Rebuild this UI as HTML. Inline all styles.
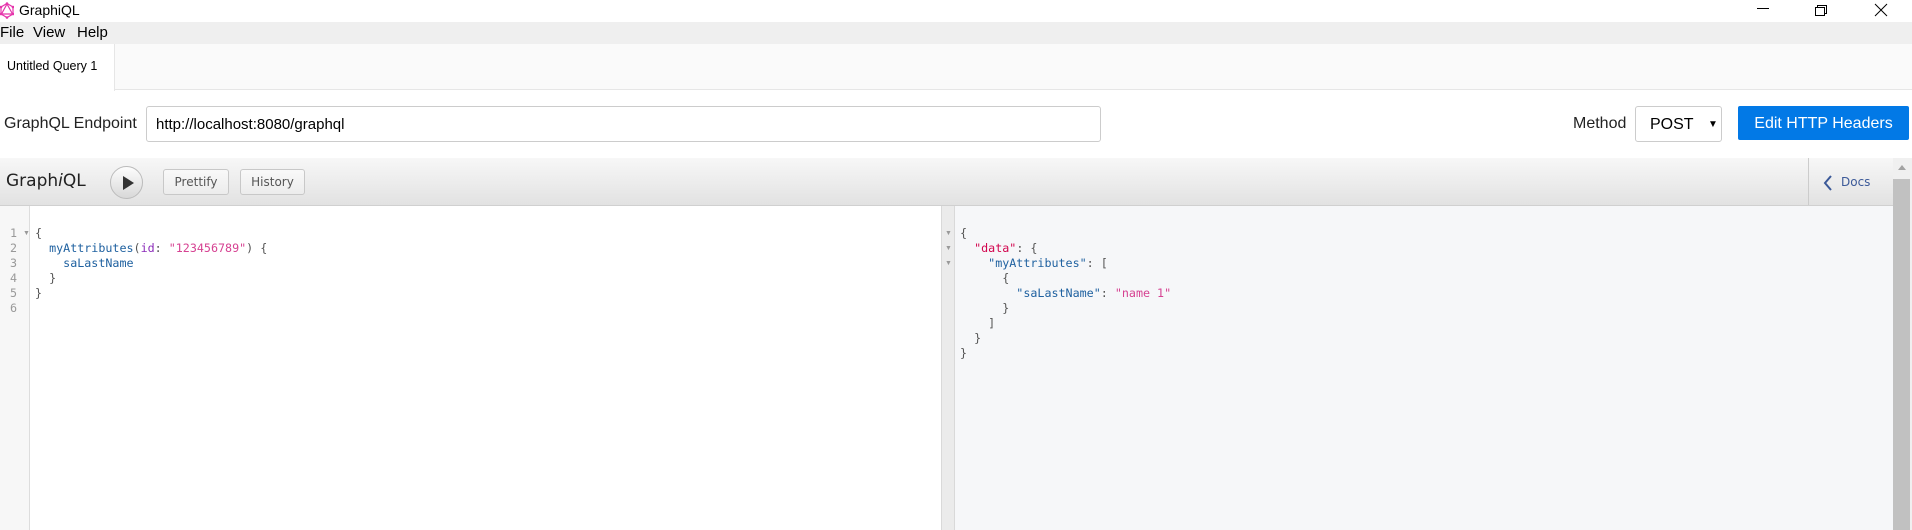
<!DOCTYPE html>
<html><head><meta charset="utf-8"><style>
*{box-sizing:border-box;margin:0;padding:0}
body{width:1912px;height:530px;overflow:hidden;background:#fff;font-family:"Liberation Sans",sans-serif;position:relative}
.a{position:absolute}
.mono{font-family:"DejaVu Sans Mono","Liberation Mono",monospace;font-size:11.7px;line-height:15px;white-space:pre}
</style></head><body>
<!-- title bar -->
<div class="a" style="left:0;top:0;width:1912px;height:22px;background:#fff"></div>
<svg class="a" style="left:0;top:2px" width="14" height="17" viewBox="0 0 14 17"><g fill="none" stroke="#e535ab" stroke-width="1.2"><polygon points="7,1.5 13,5 13,12 7,15.5 1,12 1,5"/><polygon points="7,2 12.5,12 1.5,12"/></g><g fill="#e535ab"><circle cx="7" cy="1.5" r="1.3"/><circle cx="13" cy="5" r="1.3"/><circle cx="13" cy="12" r="1.3"/><circle cx="7" cy="15.5" r="1.3"/><circle cx="1" cy="12" r="1.3"/><circle cx="1" cy="5" r="1.3"/></g></svg>
<div class="a" style="left:19px;top:2px;font-size:14px;color:#000">GraphiQL</div>
<div class="a" style="left:1757px;top:8px;width:12px;height:1px;background:#000"></div>
<div class="a" style="left:1817px;top:5px;width:10px;height:9px;border:1px solid #000;background:#fff"></div>
<div class="a" style="left:1815px;top:7px;width:10px;height:9px;border:1px solid #000;background:#fff"></div>
<svg class="a" style="left:1874px;top:3px" width="14" height="14"><path d="M1 1L13 13M13 1L1 13" stroke="#000" stroke-width="1"/></svg>
<!-- menu -->
<div class="a" style="left:0;top:22px;width:1912px;height:22px;background:#efefef;font-size:15px;line-height:22px;color:#000">
<span class="a" style="left:0">File</span><span class="a" style="left:33px">View</span><span class="a" style="left:77px">Help</span></div>
<!-- tabs -->
<div class="a" style="left:0;top:44px;width:1912px;height:46px;background:#fafafa;border-bottom:1px solid #e6e6e6"></div>
<div class="a" style="left:0;top:44px;width:115px;height:47px;background:#fff;border-right:1px solid #e6e6e6;font-size:12.5px;line-height:44px;padding-left:7px;color:#000">Untitled Query 1</div>
<!-- endpoint -->
<div class="a" style="left:4px;top:115px;font-size:16px;color:#222">GraphQL Endpoint</div>
<div class="a" style="left:146px;top:106px;width:955px;height:36px;border:1px solid #ccc;border-radius:3px;font-size:15px;line-height:35px;padding-left:9px;color:#000">http://localhost:8080/graphql</div>
<div class="a" style="left:1573px;top:115px;font-size:16px;color:#222">Method</div>
<div class="a" style="left:1635px;top:106px;width:87px;height:36px;border:1px solid #ccc;border-radius:3px;font-size:16px;line-height:36px;padding-left:14px;color:#000">POST<span class="a" style="left:72px;top:0;font-size:10px">▼</span></div>
<div class="a" style="left:1738px;top:106px;width:171px;height:34px;background:#0279e6;border-radius:2px;color:#fff;font-size:16px;line-height:36px;text-align:center">Edit HTTP Headers</div>
<!-- toolbar -->
<div class="a" style="left:0;top:158px;width:1893px;height:48px;background:linear-gradient(#f7f7f7,#e2e2e2);border-bottom:1px solid #d0d0d0"></div>
<div class="a" style="left:6px;top:171px;font-family:'DejaVu Sans',sans-serif;font-size:17px;color:#222">Graph<i>i</i>QL</div>
<div class="a" style="left:110px;top:166px;width:33px;height:33px;border-radius:50%;border:1px solid #bbb;background:linear-gradient(#fdfdfd,#d8d8d8)"></div>
<svg class="a" style="left:121px;top:175px" width="14" height="16"><polygon points="2,1 13,8 2,15" fill="#333"/></svg>
<div class="a" style="left:163px;top:169px;width:66px;height:26px;border:1px solid #c8c8c8;border-radius:3px;background:linear-gradient(#f9f9f9,#ececec);font-family:'DejaVu Sans',sans-serif;font-size:12px;line-height:24px;text-align:center;color:#555">Prettify</div>
<div class="a" style="left:240px;top:169px;width:65px;height:26px;border:1px solid #c8c8c8;border-radius:3px;background:linear-gradient(#f9f9f9,#ececec);font-family:'DejaVu Sans',sans-serif;font-size:12px;line-height:24px;text-align:center;color:#555">History</div>
<div class="a" style="left:1808px;top:158px;width:1px;height:47px;background:#ccc"></div>
<svg class="a" style="left:1823px;top:175px" width="10" height="16"><path d="M8 1L2 8L8 15" stroke="#3b5998" stroke-width="2" fill="none"/></svg>
<div class="a" style="left:1841px;top:175px;font-family:'DejaVu Sans',sans-serif;font-size:12px;color:#3b5998">Docs</div>
<!-- scrollbar -->
<div class="a" style="left:1893px;top:158px;width:19px;height:372px;background:#f0f0f0"></div>
<svg class="a" style="left:1897px;top:164px" width="10" height="8"><polygon points="5,1 9,6 1,6" fill="#a3a3a3"/></svg>
<div class="a" style="left:1893px;top:179px;width:17px;height:351px;background:#c1c1c1"></div>
<!-- query editor -->
<div class="a" style="left:0;top:206px;width:30px;height:324px;background:#f7f7f7;border-right:1px solid #ddd"></div>
<div class="a mono" style="left:10px;top:226px;color:#999">1
2
3
4
5
6</div>
<div class="a" style="left:23px;top:226px;font-size:7px;color:#999;line-height:15px">▼</div>
<div class="a mono" style="left:35px;top:226px;color:#555">{
  <span style="color:#1f61a0">myAttributes</span>(<span style="color:#8b2bb9">id</span>: <span style="color:#d64292">"123456789"</span>) {
    <span style="color:#1f61a0">saLastName</span>
  }
}</div>
<!-- divider -->
<div class="a" style="left:941px;top:206px;width:14px;height:324px;background:#ebebeb;border-left:1px solid #d9d9d9;border-right:1px solid #d9d9d9"></div>
<div class="a" style="left:955px;top:206px;width:938px;height:324px;background:#f6f7f9"></div>
<div class="a" style="left:945px;top:226px;font-size:7px;color:#999;line-height:15px">▼<br>▼<br>▼</div>
<div class="a mono" style="left:960px;top:226px;color:#555">{
  <span style="color:#d2054e">"data"</span>: {
    <span style="color:#1f61a0">"myAttributes"</span>: [
      {
        <span style="color:#1f61a0">"saLastName"</span>: <span style="color:#d64292">"name 1"</span>
      }
    ]
  }
}</div>
</body></html>
